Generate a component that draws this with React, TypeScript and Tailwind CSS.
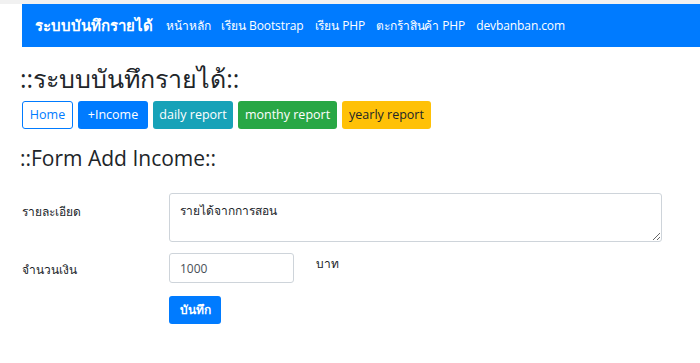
import React from 'react';

const navLinks = ['หน้าหลัก', 'เรียน Bootstrap', 'เรียน PHP', 'ตะกร้าสินค้า PHP', 'devbanban.com'];

const menuButtons = [
  { label: 'Home', cls: 'border border-[#007bff] text-[#007bff] bg-white w-[51px]' },
  { label: '+Income', cls: 'bg-[#007bff] text-white w-[70px]' },
  { label: 'daily report', cls: 'bg-[#17a2b8] text-white w-[80px]' },
  { label: 'monthy report', cls: 'bg-[#28a745] text-white w-[99px]' },
  { label: 'yearly report', cls: 'bg-[#ffc107] text-[#212529] w-[89px]' },
];

export default function App() {
  return (
    <div className="w-[700px] h-[363px] bg-white overflow-hidden text-[#212529] font-['Open_Sans','Noto_Sans',sans-serif]">
      <div className="h-[4px] bg-[#f1f1f1]" />

      {/* Navbar */}
      <nav className="ml-[22px] h-[43px] bg-[#007bff] flex items-center pl-[13px] text-white">
        <span className="text-[15px] font-bold mr-[13px]">ระบบบันทึกรายได้</span>
        <div className="flex gap-[11px] text-[12px] tracking-[-0.1px]">
          {navLinks.map((l) => (
            <span key={l}>{l}</span>
          ))}
        </div>
      </nav>

      <div className="pl-[20px]">
        <h2 className="text-[25px] leading-[30px] mt-[16px]">::ระบบบันทึกรายได้::</h2>

        {/* Menu */}
        <div className="flex gap-[5px] ml-[2px] mt-[8px]">
          {menuButtons.map((b) => (
            <button
              key={b.label}
              className={`h-[28px] rounded-[3px] text-[12.5px] flex items-center justify-center ${b.cls}`}
            >
              {b.label}
            </button>
          ))}
        </div>

        <h3 className="text-[21px] leading-[26px] mt-[16px]">::Form Add Income::</h3>

        {/* Form */}
        <div className="mt-[22px] ml-[2px] flex flex-col">
          <div className="flex">
            <label className="w-[147px] text-[12px] pt-[10px]">รายละเอียด</label>
            <textarea
              readOnly
              value="รายได้จากการสอน"
              className="w-[493px] h-[49px] border border-[#ced4da] rounded-[3px] px-[10px] py-[8px] text-[12px] resize-y outline-none"
            />
          </div>

          <div className="flex mt-[11px] items-start">
            <label className="w-[147px] text-[12px] pt-[8px]">จำนวนเงิน</label>
            <input
              readOnly
              value="1000"
              className="w-[125px] h-[30px] border border-[#ced4da] rounded-[3px] px-[10px] text-[12px] text-[#495057] outline-none"
            />
            <span className="ml-[22px] text-[12px] pt-[2px]">บาท</span>
          </div>

          <div className="flex mt-[13px]">
            <div className="w-[147px]" />
            <button className="w-[52px] h-[28px] rounded-[3px] bg-[#007bff] text-white text-[12px] font-bold">
              บันทึก
            </button>
          </div>
        </div>
      </div>
    </div>
  );
}
